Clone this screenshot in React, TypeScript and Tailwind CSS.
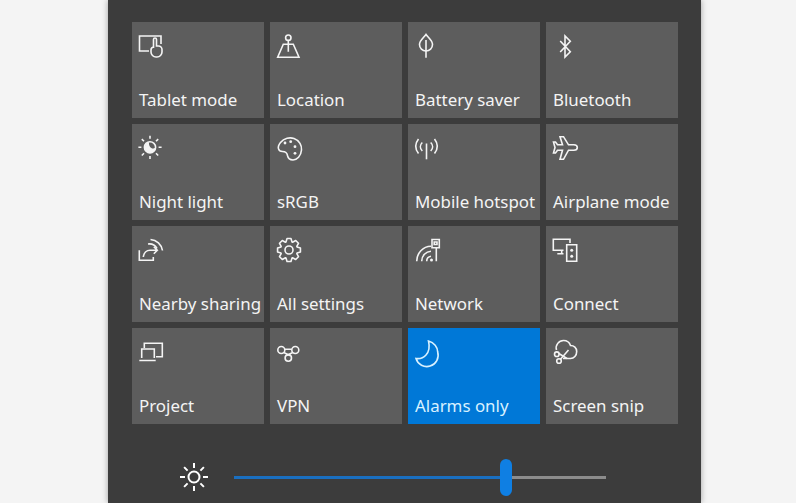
import type { ReactNode } from 'react';

const gearPath = (() => {
  // 8 tooth gear, outline only
  const cx = 13;
  const cy = 14;
  const pts: string[] = [];
  for (let i = 0; i < 8; i++) {
    const a = (i * Math.PI) / 4 - Math.PI / 2;
    const at = (r: number, d: number) =>
      `${(cx + r * Math.cos(a + d)).toFixed(2)} ${(cy + r * Math.sin(a + d)).toFixed(2)}`;
    pts.push(`${i === 0 ? 'M' : 'L'}${at(8.6, -0.36)}`);
    pts.push(`L${at(11.6, -0.17)}`);
    pts.push(`L${at(11.6, 0.17)}`);
    pts.push(`L${at(8.6, 0.36)}`);
  }
  return pts.join(' ') + 'Z';
})();

function Icon({ children }: { children: ReactNode }) {
  return (
    <svg
      width="26"
      height="26"
      viewBox="0 0 26 26"
      fill="none"
      stroke="currentColor"
      strokeWidth="1.6"
      className="overflow-visible"
    >
      {children}
    </svg>
  );
}

const tiles: { label: string; active?: boolean; icon: ReactNode }[] = [
  {
    label: 'Tablet mode',
    icon: (
      <>
        <path d="M11 19H1.500V4H23V12" />
        <path d="M15.500 16V7.500a1.500 1.500 0 0 1 3 0V14h2a3.500 3.500 0 0 1 3.500 3.500V20a5 5 0 0 1-5 5h-1a5 5 0 0 1-5-5v-2a3 3 0 0 1 2.500-3" />
      </>
    ),
  },
  {
    label: 'Location',
    icon: (
      <>
        <circle cx="12.300" cy="5.700" r="2.700" />
        <path d="M12.300 8.400V19.700M7.300 12.300H17.300L23 25.300H1.700Z" />
      </>
    ),
  },
  {
    label: 'Battery saver',
    icon: (
      <>
        <path d="M12 2.500C9.500 6 5.500 8.500 5.500 12.500a6.500 6.500 0 0 0 13 0C18.500 8.500 14.500 6 12 2.500Z" />
        <path d="M12 8V25.700" />
      </>
    ),
  },
  {
    label: 'Bluetooth',
    icon: <path d="M8.200 9 18.300 19.700 13 25V4L18.300 9.300 8.200 20" />,
  },
  {
    label: 'Night light',
    icon: (
      <>
        <circle cx="12" cy="13.300" r="5.600" />
        <path d="M7.800 17a5.600 5.600 0 0 0 9.800-3.200C14 16 10.500 13 11 8 7 9 5.800 13.500 7.800 17Z" fill="currentColor" stroke="none" />
        <path d="M12 1.700V4.700M12 21.900V24.900M.4 13.300H3.400M20.600 13.300H23.600M3.800 5.100 6 7.300M18 19.300 20.200 21.500M3.800 21.500 6 19.300M18 7.300 20.200 5.100" />
      </>
    ),
  },
  {
    label: 'sRGB',
    icon: (
      <>
        <path d="M4.500 8.500C8 4 14 3 18 4.500 23.500 6.500 26 11.500 25.500 16 25 22 21 26 17 26 13.500 26 12 24 11.500 21.500 11 18.500 9 17.500 6.500 17.500 2.500 17.500.5 13.500 4.500 8.500Z" />
        <g fill="currentColor" stroke="none">
          <circle cx="9" cy="9" r="1.400" />
          <circle cx="14.700" cy="7.700" r="1.400" />
          <circle cx="19" cy="12.700" r="1.400" />
          <circle cx="19" cy="19.300" r="1.400" />
        </g>
      </>
    ),
  },
  {
    label: 'Mobile hotspot',
    icon: (
      <>
        <path d="M12.500 9.500V25.300" />
        <path d="M4.500 5C1 9.500 1 15 4.500 19.500M8.300 8.500C5.800 11 5.800 14.500 8.300 17M20.500 5C24 9.500 24 15 20.500 19.500M16.700 8.500C19.200 11 19.200 14.500 16.700 17" />
      </>
    ),
  },
  {
    label: 'Airplane mode',
    icon: (
      <path d="M25.300 13.500C25.300 12 23.800 10.800 21.800 10.800H16.500L11.500 2.700H8L10.500 10.800H5.500L3.500 8H1.500L3 13.500 1.500 19H3.500L5.500 16.200H10.500L8 25.300H11.500L16.500 16.200H21.800C23.800 16.200 25.300 15 25.300 13.500Z" />
    ),
  },
  {
    label: 'Nearby sharing',
    icon: (
      <>
        <path d="M1.300 14.300V24.300H15.300V21" />
        <path d="M5.300 21C5.800 17 8.500 14.300 12 14.300H19.300M15.800 10.800 19.300 14.300 15.800 17.800" />
        <path d="M10 8A9 9 0 0 1 19 12.500M12.500 3.500A13 13 0 0 1 24.500 14.500" />
      </>
    ),
  },
  {
    label: 'All settings',
    icon: (
      <>
        <path d={gearPath} strokeLinejoin="round" />
        <circle cx="13" cy="14" r="4" />
      </>
    ),
  },
  {
    label: 'Network',
    icon: (
      <>
        <path d="M2.700 25.300C2.700 17 9 10.500 17 10.300M7.700 25.300C7.700 19.800 11.800 15.500 17 15.300M12.700 25.300C12.700 22.800 14.500 20.700 17 20.300" />
        <circle cx="17.500" cy="24" r="1.500" fill="currentColor" stroke="none" />
        <path d="M18 3.500H25.300V11.800H18ZM20.200 6H23V8.500H20.200ZM22.300 11.800V25.300" />
      </>
    ),
  },
  {
    label: 'Connect',
    icon: (
      <>
        <path d="M11.500 14.300H1.300V3.300H18V7M9.700 14.300V17.700M5.300 17.700H11.500" />
        <path d="M14.700 8.700H24.700V25.300H14.700Z" />
        <circle cx="19.700" cy="14.300" r="1.500" fill="currentColor" stroke="none" />
        <circle cx="19.700" cy="20.300" r="1.500" fill="currentColor" stroke="none" />
      </>
    ),
  },
  {
    label: 'Project',
    icon: (
      <>
        <path d="M6.300 10V5.300H24.300V18.700H18" />
        <path d="M3.700 20V11H16.300V20M1.300 22.500H17.700" />
      </>
    ),
  },
  {
    label: 'VPN',
    icon: (
      <>
        <circle cx="5.300" cy="12" r="3.500" />
        <circle cx="19.300" cy="12" r="3.500" />
        <circle cx="12.300" cy="20" r="3.200" />
        <path d="M7.800 14.500 14.500 17.700M16.800 14.500 10 17.700M8.800 11.300H15.800" />
      </>
    ),
  },
  {
    label: 'Alarms only',
    active: true,
    icon: (
      <path d="M14.500 3C20 4.500 23.700 9 23.700 14A11.300 11.300 0 0 1 2 20.500C9 21.500 17.500 16 14.500 3Z" />
    ),
  },
  {
    label: 'Screen snip',
    icon: (
      <>
        <path d="M4.500 12C3 7 7 2.500 11.500 2.500 15 2.500 17.500 4.500 18.500 7.500 22 7.500 24.700 10 24.700 13.500 24.700 17.500 22 20.500 18.500 20.500H11" />
        <circle cx="4.800" cy="16.200" r="2.300" />
        <circle cx="7" cy="23" r="2.300" />
        <path d="M6.800 15.500 15 20.500M8.500 21.200 16.500 12" />
      </>
    ),
  },
];

export default function App() {
  return (
    <div className="w-[796px] h-[503px] overflow-hidden bg-[#f4f4f4] font-['Noto_Sans',sans-serif]">
      <div className="ml-[108px] w-[593px] h-full bg-[#3c3c3c] pl-6 pt-[22px] shadow-[0_0_6px_rgba(0,0,0,0.35)]">
        {/* Quick action tiles */}
        <div className="grid grid-cols-[repeat(4,132px)] auto-rows-[96px] gap-1.5">
          {tiles.map((t) => (
            <div
              key={t.label}
              className={`flex flex-col justify-between pl-[7px] pt-2.5 pb-1.5 ${
                t.active ? 'bg-[#0078d7] text-[#d8f1ff]' : 'bg-[#5d5d5d] text-[#f4f4f4]'
              }`}
            >
              <div className="-ml-px">
                <Icon>{t.icon}</Icon>
              </div>
              <span className="text-[16.9px] leading-6 whitespace-nowrap">{t.label}</span>
            </div>
          ))}
        </div>

        {/* Brightness slider */}
        <div className="flex items-center mt-[34px] h-[38px]">
          <svg width="30" height="30" viewBox="0 0 30 30" fill="none" stroke="white" strokeWidth="2" className="ml-[47px] mr-[25px]">
            <circle cx="15" cy="15" r="5.500" />
            <path d="M15 1V6M15 24V29M1 15H6M24 15H29M5.100 5.100 8.600 8.600M21.400 21.400 24.900 24.900M5.100 24.900 8.600 21.400M21.400 8.600 24.900 5.100" />
          </svg>
          <div className="flex items-center w-[372px]">
            <div className="w-[266px] h-[3px] bg-[#1a6fc0]" />
            <div className="w-3 h-[37px] rounded-full bg-[#0f7fe3]" />
            <div className="flex-1 h-[3px] bg-[#8c8c8c]" />
          </div>
        </div>
      </div>
    </div>
  );
}
